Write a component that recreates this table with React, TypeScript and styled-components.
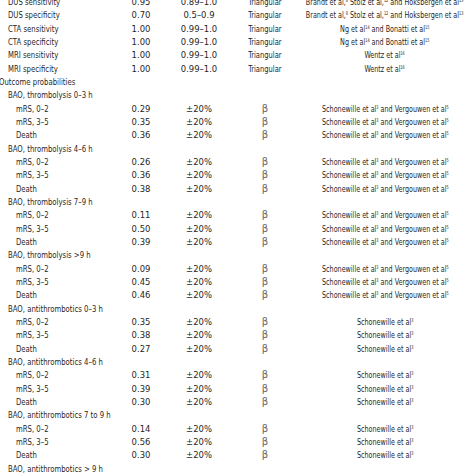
import React from 'react'
import styled, { createGlobalStyle } from 'styled-components'

const GlobalStyle = createGlobalStyle`
  html, body {
    margin: 0;
    padding: 0;
    background: #ffffff;
  }
  body {
    font-family: 'DejaVu Sans Condensed', 'Liberation Sans', sans-serif;
    color: #1f1f1f;
    overflow: hidden;
  }
`

const Table = styled.div`
  width: 474px;
  margin-top: -5px;
  display: flex;
  flex-direction: column;
`

const Row = styled.div`
  display: grid;
  grid-template-columns: 118px 46px 70px 62px 178px;
  height: 13.33px;
  align-items: center;
  font-size: 9.4px;
  line-height: 13px;
  white-space: nowrap;
`

const Label = styled.div<{ $indent: number }>`
  padding-left: ${(p) => [0, 8, 16][p.$indent]}px;
  margin-left: ${(p) => (p.$indent === 0 ? -1 : 0)}px;
`

const Centered = styled.div`
  display: flex;
  justify-content: center;
  min-width: 0;
`

const Squeeze = styled.span<{ $scale: number; $origin?: string }>`
  display: inline-block;
  flex-shrink: 0;
  transform: scaleX(${(p) => p.$scale});
  transform-origin: ${(p) => p.$origin ?? 'center'};
`

const Beta = styled.span`
  font-family: 'DejaVu Sans', sans-serif;
  font-size: 10px;
  color: #666;
`

const Sup = styled.sup`
  font-size: 5px;
  line-height: 0;
  vertical-align: 3.5px;
`

type Ref = 'dus' | 'cta' | 'mri' | 'sv' | 's'

type Line = {
  label: string
  indent: number
  value?: string
  range?: string
  dist?: string
  ref?: Ref
}

const References: React.FC<{ kind?: Ref }> = ({ kind }) => {
  switch (kind) {
    case 'dus':
      return (
        <>
          Brandt et al,<Sup>8</Sup> Stolz et al,<Sup>12</Sup> and Hoksbergen et al<Sup>13</Sup>
        </>
      )
    case 'cta':
      return (
        <>
          Ng et al<Sup>14</Sup> and Bonatti et al<Sup>15</Sup>
        </>
      )
    case 'mri':
      return (
        <>
          Wentz et al<Sup>16</Sup>
        </>
      )
    case 'sv':
      return (
        <>
          Schonewille et al<Sup>3</Sup> and Vergouwen et al<Sup>5</Sup>
        </>
      )
    case 's':
      return (
        <>
          Schonewille et al<Sup>3</Sup>
        </>
      )
    default:
      return null
  }
}

const test = (label: string, value: string, range: string, ref: Ref): Line => ({
  label,
  indent: 1,
  value,
  range,
  dist: 'Triangular',
  ref,
})

const outcome = (label: string, values: [string, string, string], ref: Ref): Line[] => [
  { label, indent: 1 },
  ...['mRS, 0–2', 'mRS, 3–5', 'Death'].map((l, i) => ({
    label: l,
    indent: 2,
    value: values[i],
    range: '±20%',
    dist: 'β',
    ref,
  })),
]

const lines: Line[] = [
  test('DUS sensitivity', '0.95', '0.89–1.0', 'dus'),
  test('DUS specificity', '0.70', '0.5–0.9', 'dus'),
  test('CTA sensitivity', '1.00', '0.99–1.0', 'cta'),
  test('CTA specificity', '1.00', '0.99–1.0', 'cta'),
  test('MRI sensitivity', '1.00', '0.99–1.0', 'mri'),
  test('MRI specificity', '1.00', '0.99–1.0', 'mri'),
  { label: 'Outcome probabilities', indent: 0 },
  ...outcome('BAO, thrombolysis 0–3 h', ['0.29', '0.35', '0.36'], 'sv'),
  ...outcome('BAO, thrombolysis 4–6 h', ['0.26', '0.36', '0.38'], 'sv'),
  ...outcome('BAO, thrombolysis 7–9 h', ['0.11', '0.50', '0.39'], 'sv'),
  ...outcome('BAO, thrombolysis >9 h', ['0.09', '0.45', '0.46'], 'sv'),
  ...outcome('BAO, antithrombotics 0–3 h', ['0.35', '0.38', '0.27'], 's'),
  ...outcome('BAO, antithrombotics 4–6 h', ['0.31', '0.39', '0.30'], 's'),
  ...outcome('BAO, antithrombotics 7 to 9 h', ['0.14', '0.56', '0.30'], 's'),
  { label: 'BAO, antithrombotics > 9 h', indent: 1 },
]

const App: React.FC = () => {
  return (
    <>
      <GlobalStyle />
      <Table>
        {lines.map((line, i) => (
          <Row key={i}>
            <Label $indent={line.indent}>
              <Squeeze $scale={0.82} $origin="left">
                {line.label}
              </Squeeze>
            </Label>
            <Centered>{line.value}</Centered>
            <Centered>{line.range}</Centered>
            <Centered>
              {line.dist === 'β' ? (
                <Beta>β</Beta>
              ) : line.dist ? (
                <Squeeze $scale={0.8}>{line.dist}</Squeeze>
              ) : null}
            </Centered>
            <Centered>
              {line.ref && (
                <Squeeze $scale={0.76}>
                  <References kind={line.ref} />
                </Squeeze>
              )}
            </Centered>
          </Row>
        ))}
      </Table>
    </>
  )
}

export default App
